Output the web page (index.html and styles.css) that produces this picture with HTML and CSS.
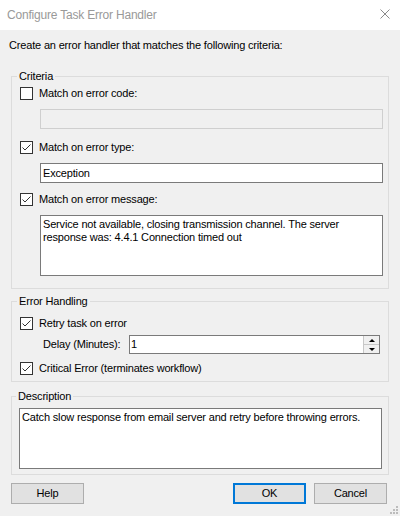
FILE: index.html
```html
<!DOCTYPE html>
<html>
<head>
    <title>Configure Task Error Handler</title>
    <link rel="stylesheet" href="styles.css">
</head>
<body>
    <div class="window">
        <div class="titlebar">
            <span class="title">Configure Task Error Handler</span>
            <svg class="close" width="10" height="10" viewBox="0 0 10 10">
                <path d="M0.5 0.5 L9.5 9.5 M9.5 0.5 L0.5 9.5" stroke="#8a8a8a" stroke-width="1" fill="none"/>
            </svg>
        </div>

        <div class="content">
            <p class="intro">Create an error handler that matches the following criteria:</p>

            <fieldset class="group criteria">
                <legend>Criteria</legend>
                <div class="check-row">
                    <span class="box"></span>
                    <span>Match on error code:</span>
                </div>
                <input type="text" class="field field-code" disabled>

                <div class="check-row row-type">
                    <span class="box">
                        <svg width="11" height="11" viewBox="0 0 11 11"><path d="M1.5 5.5 L4 8 L9.5 2.5" stroke="#333" stroke-width="1" fill="none"/></svg>
                    </span>
                    <span>Match on error type:</span>
                </div>
                <input type="text" class="field field-type" value="Exception">

                <div class="check-row row-message">
                    <span class="box">
                        <svg width="11" height="11" viewBox="0 0 11 11"><path d="M1.5 5.5 L4 8 L9.5 2.5" stroke="#333" stroke-width="1" fill="none"/></svg>
                    </span>
                    <span>Match on error message:</span>
                </div>
                <textarea class="field memo">Service not available, closing transmission channel. The server
response was: 4.4.1 Connection timed out</textarea>
            </fieldset>

            <fieldset class="group handling">
                <legend>Error Handling</legend>
                <div class="check-row">
                    <span class="box">
                        <svg width="11" height="11" viewBox="0 0 11 11"><path d="M1.5 5.5 L4 8 L9.5 2.5" stroke="#333" stroke-width="1" fill="none"/></svg>
                    </span>
                    <span>Retry task on error</span>
                </div>
                <div class="delay-row">
                    <label for="delay">Delay (Minutes):</label>
                    <div class="spin">
                        <input type="text" id="delay" value="1">
                        <div class="spin-btns">
                            <span class="spin-btn"><span class="arrow-up"></span></span>
                            <span class="spin-btn"><span class="arrow-down"></span></span>
                        </div>
                    </div>
                </div>
                <div class="check-row row-critical">
                    <span class="box">
                        <svg width="11" height="11" viewBox="0 0 11 11"><path d="M1.5 5.5 L4 8 L9.5 2.5" stroke="#333" stroke-width="1" fill="none"/></svg>
                    </span>
                    <span>Critical Error (terminates workflow)</span>
                </div>
            </fieldset>

            <fieldset class="group description">
                <legend>Description</legend>
                <textarea class="field desc-text">Catch slow response from email server and retry before throwing errors.</textarea>
            </fieldset>

            <div class="buttons">
                <button>Help</button>
                <div class="right-buttons">
                    <button class="btn-ok">OK</button>
                    <button>Cancel</button>
                </div>
            </div>
        </div>

        <svg class="grip" width="10" height="10" viewBox="0 0 10 10">
            <rect x="7" y="1" width="2" height="2" fill="#bcbcbc"/>
            <rect x="4" y="4" width="2" height="2" fill="#bcbcbc"/>
            <rect x="7" y="4" width="2" height="2" fill="#bcbcbc"/>
            <rect x="1" y="7" width="2" height="2" fill="#bcbcbc"/>
            <rect x="4" y="7" width="2" height="2" fill="#bcbcbc"/>
            <rect x="7" y="7" width="2" height="2" fill="#bcbcbc"/>
        </svg>
    </div>
</body>
</html>
```

FILE: styles.css
```css
body {
    margin: 0;
    background-color: #f0f0f0;
    font-family: "Liberation Sans", Arial, sans-serif;
    font-size: 11px;
    line-height: 13px;
    letter-spacing: -0.17px;
    color: #000;
}
.window {
    position: relative;
    width: 400px;
    height: 516px;
}
.titlebar {
    height: 30px;
    background-color: #fff;
    display: flex;
    align-items: center;
    justify-content: space-between;
    padding: 0 10px 0 7px;
    box-sizing: border-box;
}
.title {
    font-size: 12px;
    line-height: 14px;
    letter-spacing: -0.2px;
    color: #999;
}
.close {
    margin-bottom: 2px;
}
.content {
    padding: 0 11px;
}
.intro {
    margin: 9px -2px 0;
}
.group {
    margin: 0;
    min-inline-size: 0;
    border: 1px solid #dcdcdc;
}
legend {
    padding: 0 2px;
    margin-left: -3px;
    line-height: 13px;
}
.criteria {
    margin-top: 18px;
    padding: 4px 5px 12px 8px;
}
.handling {
    margin-top: 6px;
    padding: 9px 5px 6px 8px;
}
.description {
    margin-top: 8px;
    padding: 5px 6px 5px 7px;
}
.check-row {
    display: flex;
    align-items: center;
    gap: 6px;
    height: 13px;
}
.box {
    width: 13px;
    height: 13px;
    box-sizing: border-box;
    border: 1px solid #333;
    background-color: #fff;
    display: flex;
}
.field {
    display: block;
    box-sizing: border-box;
    margin: 0;
    border: 1px solid #7a7a7a;
    padding: 0 2px;
    background-color: #fff;
    font: inherit;
    letter-spacing: inherit;
    color: #000;
    outline: none;
}
.field-code,
.field-type,
.memo {
    width: 343px;
    margin-left: 20px;
    margin-top: 9px;
}
.field-code,
.field-type {
    height: 20px;
}
.field-code {
    background-color: #f0f0f0;
    border-color: #cfcfcf;
}
.row-type {
    margin-top: 12px;
}
.row-message {
    margin-top: 10px;
}
.memo {
    height: 61px;
    padding: 2px 2px;
    resize: none;
    overflow: hidden;
}
.delay-row {
    display: flex;
    align-items: center;
    margin-top: 5px;
}
.delay-row label {
    width: 109px;
    padding-left: 23px;
    box-sizing: border-box;
}
.spin {
    display: flex;
    width: 251px;
    height: 19px;
    box-sizing: border-box;
    border: 1px solid #7a7a7a;
    background-color: #fff;
}
.spin input {
    flex: 1;
    min-width: 0;
    border: none;
    padding: 0 1px;
    font: inherit;
    letter-spacing: inherit;
    outline: none;
    background: transparent;
}
.spin-btns {
    width: 15px;
    display: flex;
    flex-direction: column;
    border: 1px solid #c8c8c8;
    border-width: 0 0 0 1px;
}
.spin-btn {
    flex: 1;
    display: flex;
    align-items: center;
    justify-content: center;
    background-color: #f0f0f0;
}
.spin-btn + .spin-btn {
    border-top: 1px solid #c8c8c8;
}
.arrow-up {
    width: 0;
    height: 0;
    border-left: 3px solid transparent;
    border-right: 3px solid transparent;
    border-bottom: 3px solid #000;
}
.arrow-down {
    width: 0;
    height: 0;
    border-left: 3px solid transparent;
    border-right: 3px solid transparent;
    border-top: 3px solid #000;
}
.row-critical {
    margin-top: 8px;
}
.desc-text {
    width: 100%;
    height: 61px;
    padding: 2px 2px;
    resize: none;
    overflow: hidden;
}
.buttons {
    display: flex;
    justify-content: space-between;
    margin-top: 8px;
    padding-right: 2px;
}
.right-buttons {
    display: flex;
    gap: 8px;
}
button {
    width: 73px;
    height: 21px;
    box-sizing: border-box;
    padding: 0;
    background-color: #e1e1e1;
    border: 1px solid #adadad;
    font: inherit;
    letter-spacing: inherit;
    color: #000;
}
.btn-ok {
    border: 2px solid #0078d7;
}
.grip {
    position: absolute;
    right: 1px;
    bottom: 1px;
}
```
